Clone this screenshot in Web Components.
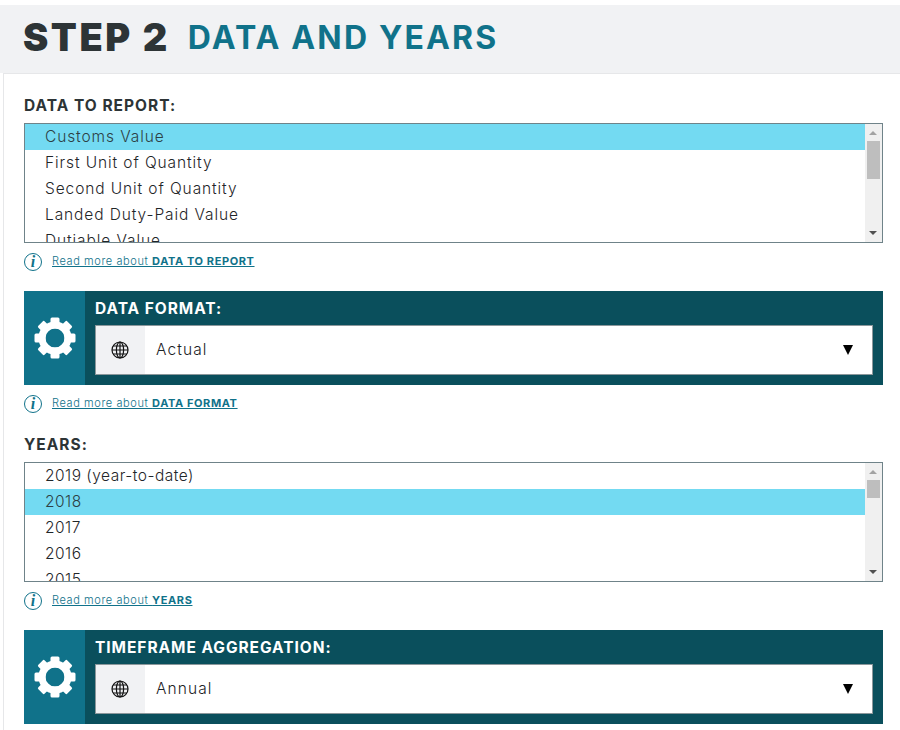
<!DOCTYPE html>
<html lang="en">
<head>
<meta charset="utf-8">
<title>Step 2</title>
<style>
  html, body { margin: 0; padding: 0; background: #fff; }
  body { font-family: Inter, "Liberation Sans", Arial, sans-serif; height: 730px; overflow: hidden; }
  .years { --option-spacing: 0.5px; }
</style>
</head>
<body>
<step-page>
  <step-header slot="header" step="STEP 2" title="DATA AND YEARS"></step-header>

  <field-label>DATA TO REPORT:</field-label>
  <list-box thumb-top="17" thumb-height="38">
    <list-option selected>Customs Value</list-option>
    <list-option>First Unit of Quantity</list-option>
    <list-option>Second Unit of Quantity</list-option>
    <list-option>Landed Duty-Paid Value</list-option>
    <list-option>Dutiable Value</list-option>
  </list-box>
  <info-link topic="DATA TO REPORT"></info-link>

  <select-panel label="DATA FORMAT:" value="Actual"></select-panel>
  <info-link topic="DATA FORMAT"></info-link>

  <field-label class="second">YEARS:</field-label>
  <list-box class="years" thumb-top="17" thumb-height="18">
    <list-option>2019 (year-to-date)</list-option>
    <list-option selected>2018</list-option>
    <list-option>2017</list-option>
    <list-option>2016</list-option>
    <list-option>2015</list-option>
  </list-box>
  <info-link topic="YEARS"></info-link>

  <select-panel label="TIMEFRAME AGGREGATION:" value="Annual"></select-panel>
</step-page>

<script>
class StepPage extends HTMLElement {
  connectedCallback() {
    if (this.shadowRoot) return;
    const shadow = this.attachShadow({ mode: 'open' });
    shadow.innerHTML = `
      <style>
        :host { display: block; padding-top: 5px; }
        .card {
          min-height: 660px;
          margin-left: 3px;
          padding: 22px 17px 0 20px;
          background: #fff;
          border-top: 1px solid #e6e7e9;
          border-left: 1px solid #e6e7e9;
        }
      </style>
      <slot name="header"></slot>
      <div class="card"><slot></slot></div>
    `;
  }
}

class StepHeader extends HTMLElement {
  connectedCallback() {
    if (this.shadowRoot) return;
    const shadow = this.attachShadow({ mode: 'open' });
    shadow.innerHTML = `
      <style>
        :host {
          display: flex;
          align-items: center;
          gap: 18px;
          height: 68px;
          padding: 0 0 4px 23px;
          box-sizing: border-box;
          background: #f1f2f4;
          white-space: nowrap;
        }
        .step { font-size: 38px; font-weight: 900; color: #2d3436; letter-spacing: 2.5px; }
        .title { font-size: 32px; font-weight: 700; color: #10728a; letter-spacing: 2.15px; }
      </style>
      <span class="step"></span>
      <span class="title"></span>
    `;
    shadow.querySelector('.step').textContent = this.getAttribute('step');
    shadow.querySelector('.title').textContent = this.getAttribute('title');
  }
}

class FieldLabel extends HTMLElement {
  connectedCallback() {
    if (this.shadowRoot) return;
    const shadow = this.attachShadow({ mode: 'open' });
    shadow.innerHTML = `
      <style>
        :host {
          display: block;
          height: 27px;
          line-height: 20px;
          font-size: 15.5px;
          font-weight: 700;
          letter-spacing: 1px;
          color: #2d3436;
        }
        :host(.second) { margin-top: 14px; }
      </style>
      <slot></slot>
    `;
  }
}

class ListBox extends HTMLElement {
  connectedCallback() {
    if (this.shadowRoot) return;
    const shadow = this.attachShadow({ mode: 'open' });
    const thumbTop = this.getAttribute('thumb-top') || 0;
    const thumbHeight = this.getAttribute('thumb-height') || 20;
    shadow.innerHTML = `
      <style>
        :host {
          display: flex;
          height: 120px;
          box-sizing: border-box;
          border: 1px solid #6f8389;
          background: #fff;
          overflow: hidden;
        }
        .options { flex: 1; min-width: 0; overflow: hidden; }
        .scrollbar {
          position: relative;
          flex: 0 0 17px;
          background: #f0f0f0;
        }
        .thumb {
          position: absolute;
          left: 2px;
          width: 13px;
          background: #bebebe;
        }
        .arrow {
          position: absolute;
          left: 4px;
          width: 0;
          height: 0;
          border-left: 4px solid transparent;
          border-right: 4px solid transparent;
        }
        .up { top: 7px; border-bottom: 4px solid #a3a3a3; }
        .down { bottom: 7px; border-top: 4px solid #505050; }
      </style>
      <div class="options"><slot></slot></div>
      <div class="scrollbar">
        <span class="arrow up"></span>
        <span class="thumb" style="top:${thumbTop}px;height:${thumbHeight}px"></span>
        <span class="arrow down"></span>
      </div>
    `;
  }
}

class ListOption extends HTMLElement {
  connectedCallback() {
    if (this.shadowRoot) return;
    const shadow = this.attachShadow({ mode: 'open' });
    shadow.innerHTML = `
      <style>
        :host {
          display: block;
          height: 26px;
          line-height: 25px;
          padding-left: 20px;
          font-size: 15.5px;
          font-weight: 300;
          letter-spacing: var(--option-spacing, 0.9px);
          color: #1f2629;
          white-space: nowrap;
        }
        :host([selected]) { background: #73daf2; color: #2d3f45; }
      </style>
      <slot></slot>
    `;
  }
}

class InfoLink extends HTMLElement {
  connectedCallback() {
    if (this.shadowRoot) return;
    const shadow = this.attachShadow({ mode: 'open' });
    shadow.innerHTML = `
      <style>
        :host {
          display: flex;
          align-items: center;
          gap: 10px;
          height: 36px;
          box-sizing: border-box;
          color: #10728a;
        }
        .icon {
          display: flex;
          align-items: center;
          justify-content: center;
          width: 16px;
          height: 16px;
          margin-top: 1px;
          border: 1px solid #10728a;
          border-radius: 50%;
          font: italic bold 16px/16px "Liberation Serif", serif;
        }
        a {
          font-size: 11px;
          font-weight: 300;
          letter-spacing: 0.6px;
          color: inherit;
          text-decoration: underline;
        }
        b { font-weight: 700; }
      </style>
      <span class="icon">i</span>
      <a href="#">Read more about <b></b></a>
    `;
    shadow.querySelector('b').textContent = this.getAttribute('topic');
  }
}

class SelectPanel extends HTMLElement {
  connectedCallback() {
    if (this.shadowRoot) return;
    const shadow = this.attachShadow({ mode: 'open' });
    const teeth = [0, 45, 90, 135, 180, 225, 270, 315]
      .map((angle) => `<rect x="-4.5" y="-20.5" width="9" height="11" rx="1.5" transform="rotate(${angle})"/>`)
      .join('');
    shadow.innerHTML = `
      <style>
        :host {
          display: flex;
          height: 94px;
          margin-top: 12px;
          background: #0a4f5c;
          color: #fff;
        }
        .side {
          display: flex;
          align-items: center;
          justify-content: center;
          flex: 0 0 61px;
          background: #10728a;
        }
        .side svg { display: block; width: 42px; height: 42px; }
        .main { flex: 1; min-width: 0; padding: 6px 10px 0; }
        .label { height: 28px; line-height: 23px; font-size: 15.5px; font-weight: 700; letter-spacing: 0.95px; }
        .select {
          display: flex;
          align-items: center;
          height: 50px;
          box-sizing: border-box;
          border: 1px solid #8b979b;
          background: #fff;
          color: #1c2225;
          font-size: 15.5px;
          font-weight: 300;
          letter-spacing: 1.1px;
        }
        .addon {
          display: flex;
          align-items: center;
          justify-content: center;
          flex: 0 0 48px;
          padding-right: 1px;
          align-self: stretch;
          background: #f1f2f4;
        }
        .addon svg { display: block; width: 18px; height: 18px; }
        .value { flex: 1; padding-left: 11px; margin-top: -2px; }
        .caret {
          width: 0;
          height: 0;
          margin-right: 19px;
          border-left: 5px solid transparent;
          border-right: 5px solid transparent;
          border-top: 10px solid #000;
        }
      </style>
      <div class="side">
        <svg viewBox="-21 -21 42 42" fill="#fff">
          ${teeth}
          <circle r="13" fill="none" stroke="#fff" stroke-width="7"/>
        </svg>
      </div>
      <div class="main">
        <div class="label"></div>
        <div class="select">
          <span class="addon">
            <svg viewBox="0 0 18 18" fill="none" stroke="#111" stroke-width="1.2">
              <circle cx="9" cy="9" r="8"/>
              <ellipse cx="9" cy="9" rx="3.6" ry="8"/>
              <path d="M9 1v16M1 9h16M2.1 5h13.8M2.1 13h13.8"/>
            </svg>
          </span>
          <span class="value"></span>
          <span class="caret"></span>
        </div>
      </div>
    `;
    shadow.querySelector('.label').textContent = this.getAttribute('label');
    shadow.querySelector('.value').textContent = this.getAttribute('value');
  }
}

customElements.define('step-page', StepPage);
customElements.define('step-header', StepHeader);
customElements.define('field-label', FieldLabel);
customElements.define('list-box', ListBox);
customElements.define('list-option', ListOption);
customElements.define('info-link', InfoLink);
customElements.define('select-panel', SelectPanel);
</script>
</body>
</html>
